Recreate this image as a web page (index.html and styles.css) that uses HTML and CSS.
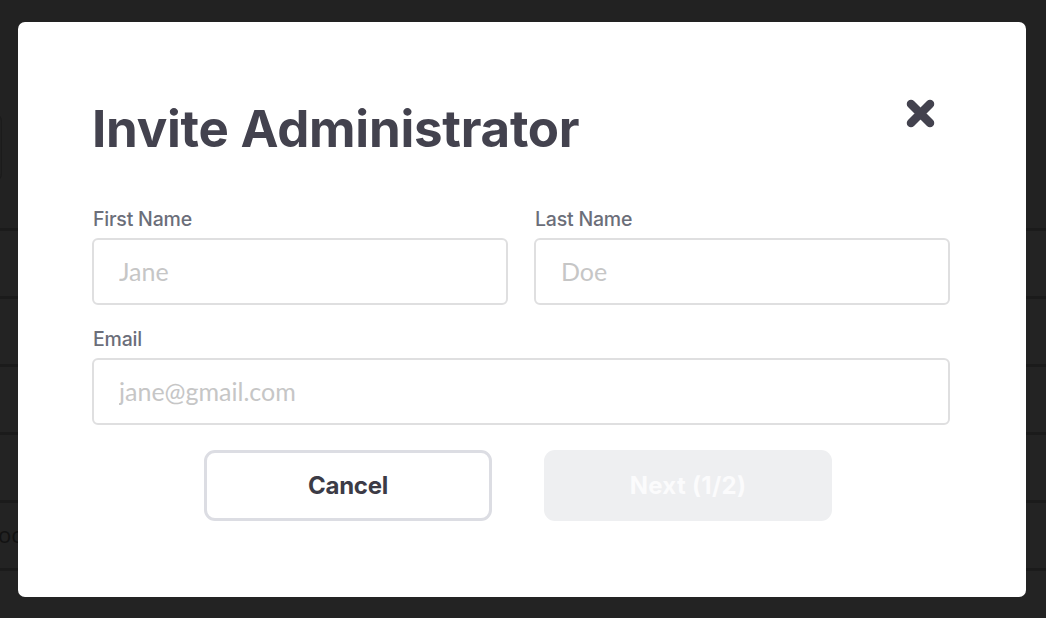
FILE: index.html
```html
<!DOCTYPE html>
<html lang="en">
<head>
<meta charset="utf-8">
<title>Invite Administrator</title>
<link rel="stylesheet" href="styles.css">
</head>
<body>
<div class="page">
  <div class="topbar"><div class="search-edge"></div></div>
  <div class="rows">
    <div class="row"></div>
    <div class="row"></div>
    <div class="row"></div>
    <div class="row"></div>
    <div class="row"><span class="row-text">oc</span></div>
    <div class="row"></div>
  </div>
</div>

<div class="overlay">
  <div class="modal" role="dialog" aria-labelledby="modal-title">
    <div class="modal-header">
      <h1 class="modal-title" id="modal-title">Invite Administrator</h1>
      <button class="close-btn" type="button" aria-label="Close">
        <svg width="29" height="29" viewBox="0 0 29 29" aria-hidden="true">
          <path d="M5 5 L24 24 M24 5 L5 24" stroke="#43424e" stroke-width="8.5" stroke-linecap="round" fill="none"/>
        </svg>
      </button>
    </div>
    <form class="form">
      <div class="field-row">
        <label class="field">
          <span class="field-label">First Name</span>
          <input class="field-input" type="text" placeholder="Jane">
        </label>
        <label class="field">
          <span class="field-label">Last Name</span>
          <input class="field-input" type="text" placeholder="Doe">
        </label>
      </div>
      <label class="field field-email">
        <span class="field-label">Email</span>
        <input class="field-input" type="email" placeholder="jane@gmail.com">
      </label>
      <div class="actions">
        <button class="btn btn-cancel" type="button">Cancel</button>
        <button class="btn btn-next" type="button" disabled>Next (1/2)</button>
      </div>
    </form>
  </div>
</div>
</body>
</html>
```

FILE: styles.css
```css
* {
  box-sizing: border-box;
}

html, body {
  margin: 0;
  padding: 0;
  width: 1046px;
  height: 618px;
  overflow: hidden;
}

body {
  background: #232323;
  font-family: "Inter", "Liberation Sans", sans-serif;
}

/* underlying (dimmed) page */
.page {
  width: 100%;
}

.topbar {
  height: 228px;
  padding-top: 113px;
  background: #222222;
}

.search-edge {
  width: 102px;
  height: 69px;
  margin-left: -100px;
  border: 1px solid #1b1b1b;
  border-radius: 8px;
  background: #202020;
}

.rows {
  display: flex;
  flex-direction: column;
}

.row {
  height: 68px;
  border-top: 3px solid #1b1b1b;
  background: #232323;
  display: flex;
  align-items: center;
}

.row-text {
  margin-left: -2px;
  margin-top: -4px;
  font-family: "Open Sans", "Liberation Sans", sans-serif;
  font-size: 22px;
  color: #121212;
}

/* modal */
.overlay {
  position: fixed;
  inset: 0;
  padding: 22px 20px 21px 18px;
}

.modal {
  height: 100%;
  background: #ffffff;
  border-radius: 7px;
  padding: 76px 76px 0 74px;
}

.modal-header {
  display: flex;
  justify-content: space-between;
  align-items: flex-start;
  height: 61px;
  margin-bottom: 49px;
}

.modal-title {
  margin: 0;
  font-size: 51px;
  line-height: 61px;
  font-weight: 700;
  color: #43424e;
  letter-spacing: -0.25px;
}

.close-btn {
  margin: 1px 15px 0 0;
  padding: 0;
  border: 0;
  background: none;
  width: 29px;
  height: 29px;
  display: flex;
}

.form {
  display: flex;
  flex-direction: column;
}

.field-row {
  display: grid;
  grid-template-columns: 1fr 1fr;
  column-gap: 26px;
}

.field {
  display: flex;
  flex-direction: column;
}

.field-email {
  margin-top: 23px;
}

.field-label {
  padding-left: 1px;
  font-size: 19.5px;
  line-height: 23px;
  font-weight: 500;
  color: #6b6e79;
  letter-spacing: -0.2px;
  margin-bottom: 7px;
}

.field-input {
  height: 67px;
  border: 2px solid #dfdfe0;
  border-radius: 6px;
  padding: 0 25px 2px;
  font-family: "Lato", "Liberation Sans", sans-serif;
  font-size: 25px;
  color: #333;
  background: #fff;
  outline: none;
}

.field-input::placeholder {
  color: #c6c6c6;
}

.actions {
  display: flex;
  justify-content: center;
  gap: 52px;
  margin-top: 25px;
  padding-right: 6px;
}

.btn {
  width: 288px;
  height: 71px;
  border-radius: 11px;
  font-family: "Inter", "Liberation Sans", sans-serif;
  font-size: 24px;
  font-weight: 700;
  cursor: pointer;
}

.btn-cancel {
  background: #ffffff;
  border: 3px solid #dcdde3;
  color: #3c3b46;
  letter-spacing: -0.3px;
}

.btn-next {
  background: #eeeff1;
  border: 0;
  color: #fbfbfc;
  letter-spacing: 0.3px;
}
```
